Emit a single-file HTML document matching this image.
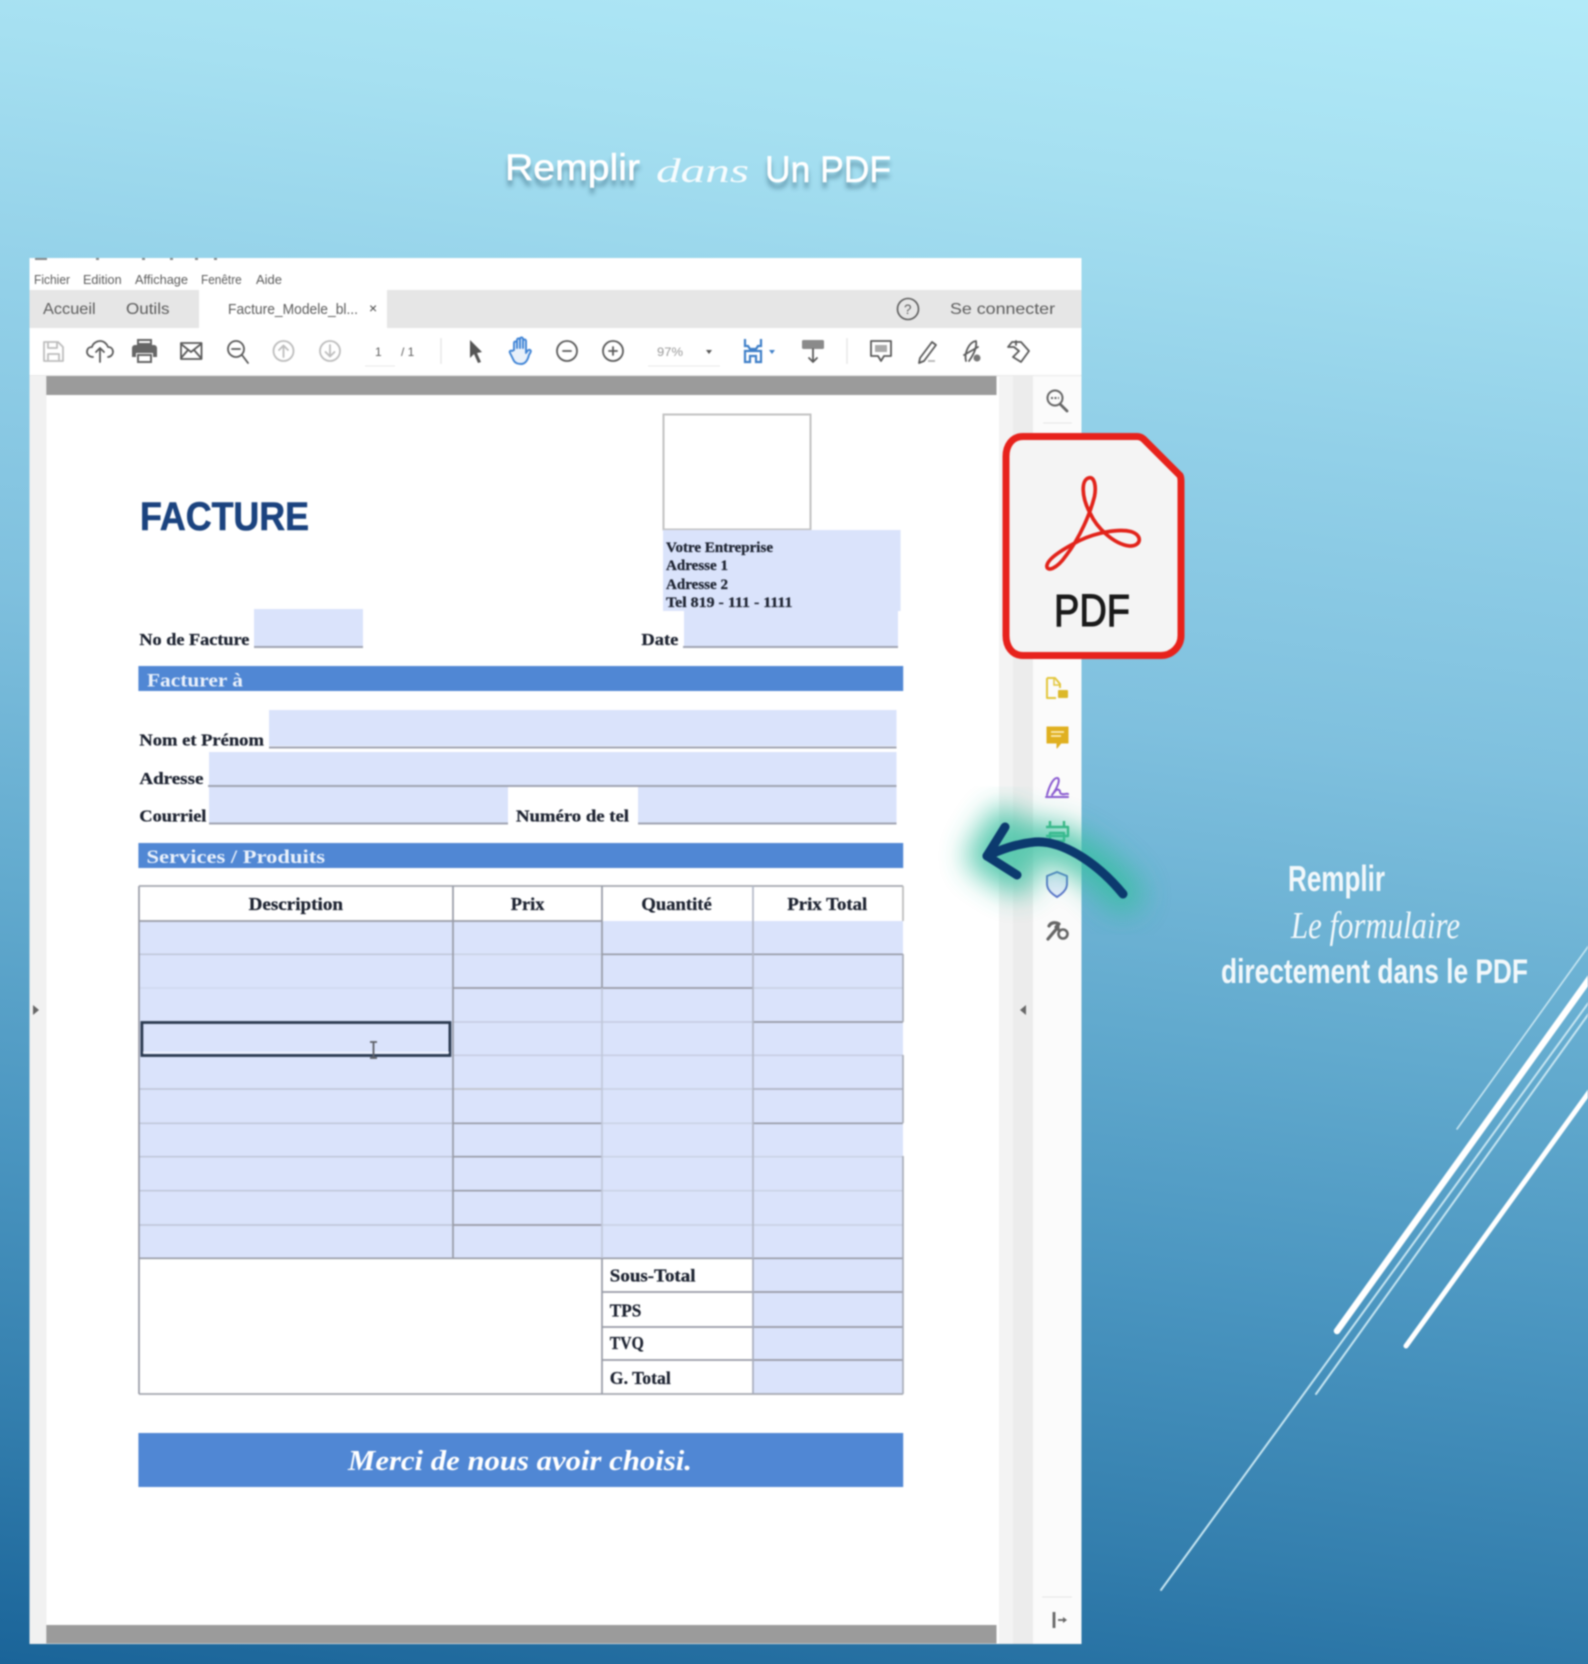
<!DOCTYPE html>
<html lang="fr">
<head>
<meta charset="utf-8">
<title>Remplir dans Un PDF</title>
<style>
html,body{margin:0;padding:0;width:1588px;height:1664px;overflow:hidden}
body{background:linear-gradient(187deg,#b2eaf8 0%,#a6e0f1 12%,#92d0e8 26%,#7fc0de 42%,#62aace 58%,#4a95c0 72%,#347fae 86%,#1a6499 100%)}
svg{position:absolute;left:0;top:0;filter:blur(.7px)}
.s{font-family:"Liberation Serif",serif;font-weight:bold;fill:#1c2230;stroke:#1c2230;stroke-width:.25}
.u{font-family:"Liberation Sans",sans-serif;fill:#5c5c5c}
.g{fill:none;stroke:#5a5a5a;stroke-width:1.8;stroke-linecap:round;stroke-linejoin:round}
.f{fill:none;stroke:#bdbdbd;stroke-width:1.8;stroke-linecap:round;stroke-linejoin:round}
</style>
</head>
<body>
<svg width="1588" height="1664" viewBox="0 0 1588 1664" xmlns="http://www.w3.org/2000/svg">
<defs>
<filter id="shadow" x="-20%" y="-50%" width="140%" height="220%"><feGaussianBlur stdDeviation="2.5"/></filter>
<filter id="glow" x="-40%" y="-60%" width="180%" height="220%"><feGaussianBlur stdDeviation="14"/></filter>
</defs>

<!-- decorative lines -->
<g stroke-linecap="round">
<line x1="1337" y1="1331" x2="1600" y2="964" stroke="#fff" stroke-width="6.500"/>
<line x1="1406" y1="1346" x2="1600" y2="1077" stroke="#fff" stroke-width="5"/>
<line x1="1161" y1="1590" x2="1600" y2="987" stroke="#c7e6f2" stroke-width="2"/>
<line x1="1316" y1="1394" x2="1600" y2="998" stroke="#c7e6f2" stroke-width="2"/>
<line x1="1457" y1="1129" x2="1600" y2="930" stroke="#c7e6f2" stroke-width="1.600"/>
</g>

<!-- title -->
<g font-family="'Liberation Sans',sans-serif" filter="url(#shadow)" fill="#33637a" opacity=".65" font-size="37">
<text x="505" y="186" textLength="135" lengthAdjust="spacingAndGlyphs">Remplir</text>
<text x="765" y="188" textLength="126" lengthAdjust="spacingAndGlyphs">Un PDF</text>
</g>
<g fill="#fff">
<text x="505" y="180" font-family="'Liberation Sans',sans-serif" font-size="37" stroke="#fff" stroke-width=".5" textLength="135" lengthAdjust="spacingAndGlyphs">Remplir</text>
<text x="656" y="182" font-family="'Liberation Serif',serif" font-style="italic" font-size="34" textLength="93" lengthAdjust="spacingAndGlyphs" opacity=".9">dans</text>
<text x="765" y="182" font-family="'Liberation Sans',sans-serif" font-size="37" stroke="#fff" stroke-width=".5" textLength="126" lengthAdjust="spacingAndGlyphs">Un PDF</text>
</g>

<!-- window -->
<rect x="29.5" y="258" width="1052" height="1386" fill="#fff"/>
<g fill="#888"><rect x="35" y="258" width="12" height="2"/><rect x="96" y="258" width="3" height="2"/><rect x="142" y="258" width="3" height="2"/><rect x="170" y="258" width="3" height="2"/><rect x="195" y="258" width="3" height="2"/><rect x="214" y="258" width="3" height="2"/></g>
<g class="u" font-size="12.5" fill="#6a6a6a">
<text x="34" y="284" textLength="36" lengthAdjust="spacingAndGlyphs">Fichier</text>
<text x="83" y="284" textLength="38.600" lengthAdjust="spacingAndGlyphs">Edition</text>
<text x="135" y="284" textLength="53" lengthAdjust="spacingAndGlyphs">Affichage</text>
<text x="201" y="284" textLength="40.700" lengthAdjust="spacingAndGlyphs">Fenêtre</text>
<text x="256" y="284" textLength="26" lengthAdjust="spacingAndGlyphs">Aide</text>
</g>
<rect x="29.5" y="290" width="1052" height="38" fill="#e6e6e6"/>
<rect x="199" y="290" width="188" height="38" fill="#fff"/>
<g class="u" font-size="16">
<text x="43" y="314" textLength="52.600" lengthAdjust="spacingAndGlyphs">Accueil</text>
<text x="126" y="314" textLength="43.500" lengthAdjust="spacingAndGlyphs">Outils</text>
<text x="228" y="314" font-size="14.500" textLength="130" lengthAdjust="spacingAndGlyphs">Facture_Modele_bl...</text>
<text x="369" y="313" font-size="14" fill="#444">×</text>
<text x="950" y="314" textLength="105" lengthAdjust="spacingAndGlyphs">Se connecter</text>
</g>
<circle cx="908" cy="309" r="10.500" fill="none" stroke="#5a5a5a" stroke-width="1.600"/>
<text x="904" y="314" class="u" font-size="13.500">?</text>

<!-- toolbar -->
<rect x="29.5" y="328" width="1052" height="48" fill="#fff"/>
<rect x="29.5" y="375" width="1052" height="1.500" fill="#e9e9e9"/>
<!-- save -->
<path class="f" d="M44 342h14l5 5v14H44zM48 342v6h9v-6M48 361v-7h11v7"/>
<!-- upload -->
<path class="g" d="M93 357c-4 0-6-3-6-5 0-4 3-5 5-5 1-4 5-6 8-6 4 0 7 3 8 6 3 0 5 2 5 5 0 2-2 5-5 5"/>
<path class="g" d="M100 362v-14M96 352l4-4 4 4"/>
<!-- print -->
<path d="M135 345h19a3 3 0 0 1 3 3v9h-4v-4h-17v4h-4v-9a3 3 0 0 1 3-3z" fill="#666"/>
<path d="M138 340h13v4h-13z" fill="none" stroke="#666" stroke-width="2"/>
<rect x="138" y="355" width="13" height="7" fill="none" stroke="#666" stroke-width="2"/>
<!-- mail -->
<rect x="181" y="343" width="20.500" height="16" class="g"/>
<path class="g" d="M181 344l10 8 10-8M181 358l7-8M201 358l-7-8" stroke-width="1.500"/>
<!-- search -->
<circle cx="236" cy="349" r="8" class="g"/>
<path class="g" d="M242 355l6 8M232 349h8" stroke-width="2.200"/>
<!-- page up/down -->
<circle cx="283.500" cy="351" r="10" class="f"/><path class="f" d="M283.500 357v-11M279 350l4.500-4.500 4.500 4.500"/>
<circle cx="330" cy="351" r="10" class="f"/><path class="f" d="M330 345v11M325.500 352l4.500 4.500 4.500-4.500"/>
<g class="u" font-size="12" fill="#777"><text x="375" y="356">1</text><text x="401" y="356">/ 1</text></g>
<line x1="365" y1="366" x2="395" y2="366" stroke="#e8e8e8"/>
<line x1="441" y1="338" x2="441" y2="364" stroke="#e8e8e8" stroke-width="1.500"/>
<!-- cursor -->
<path d="M470 340l12 12-5 1 4 9-3 1-4-9-4 4z" fill="#555"/>
<!-- hand -->
<path d="M514 350v-7c0-2 3-2 3 0v5-8c0-2 3-2 3 0v8-9c0-2 3-2 3 0v9-7c0-2 3-2 3 0v12c1-2 3-4 4-3 2 1 0 3-1 5-1 4-3 9-8 9-5 0-7-2-8-5l-3-6c-1-2 1-3 2-2z" fill="#e8f0fa" stroke="#3f84d6" stroke-width="1.900" stroke-linejoin="round"/>
<!-- zoom out / in -->
<circle cx="567" cy="351" r="10" class="g"/><path class="g" d="M563 351h8" stroke-width="2.400"/>
<circle cx="613" cy="351" r="10" class="g"/><path class="g" d="M609 351h8M613 347v8" stroke-width="2.400"/>
<text x="657" y="356" class="u" font-size="12" style="fill:#999" textLength="26" lengthAdjust="spacingAndGlyphs">97%</text>
<path d="M706 350h6l-3 4z" fill="#555"/>
<line x1="648" y1="366" x2="720" y2="366" stroke="#e8e8e8"/>
<!-- fit -->
<path d="M745 339v7h3l2 3h6l2-3h3v-7M745 362v-11h16v11h-5v-6h-6v6z" fill="none" stroke="#3f7fc8" stroke-width="2.200"/>
<path d="M769 350h6l-3 4z" fill="#3f7fc8"/>
<!-- tool -->
<rect x="802" y="340" width="22" height="9" rx="1.500" fill="#8a8a8a"/>
<path class="g" d="M813 349v13M809 358l4 4 4-4"/>
<line x1="847" y1="338" x2="847" y2="364" stroke="#e8e8e8" stroke-width="1.500"/>
<!-- comment -->
<path class="g" d="M871 341h20v15h-7l-3 5-3-5h-7z"/><rect x="875" y="345" width="12" height="7" fill="#aaa"/>
<!-- pen -->
<path class="g" d="M920 358l12-16 4 3-12 16-5 2z"/><path d="M928 361h7" stroke="#bbb" stroke-width="2"/>
<!-- sign -->
<path class="g" d="M966 361c-2-8 3-19 10-20 1 6-2 13-7 20M964 355l14-8"/><circle cx="977" cy="358" r="3.500" fill="#777"/>
<!-- share -->
<path class="g" d="M1012 342h9l8 9-8 11-8-5 6-6-5-4h-6l4-5zM1016 345v-4"/>

<!-- doc area -->
<rect x="29.5" y="376" width="17" height="1268" fill="#f1f1f1"/>
<rect x="46.300" y="376" width="950.200" height="19" fill="#9b9b9b"/>
<rect x="46.300" y="1625" width="950.200" height="18.500" fill="#9b9b9b"/>
<rect x="999" y="376" width="14" height="1268" fill="#f3f3f3"/>
<rect x="1013" y="376" width="20" height="1268" fill="#ececec"/>
<rect x="1033" y="376" width="48.500" height="1268" fill="#fbfbfb"/>
<path d="M33 1005l6 5-6 5z" fill="#666"/>
<path d="M1026 1005l-6 5 6 5z" fill="#666"/>
<line x1="1043" y1="423" x2="1072" y2="423" stroke="#e6e6e6"/>
<line x1="1042" y1="1597" x2="1072" y2="1597" stroke="#e6e6e6"/>

<!-- logo box & company -->
<rect x="663.500" y="414.500" width="147" height="115" fill="#fff" stroke="#c2c2c2" stroke-width="2"/>
<rect x="663" y="530" width="237.600" height="81" fill="#dae3fb"/>
<g class="s" font-size="14.500">
<text x="666" y="552" textLength="107" lengthAdjust="spacingAndGlyphs">Votre Entreprise</text>
<text x="666" y="570" textLength="62" lengthAdjust="spacingAndGlyphs">Adresse 1</text>
<text x="666" y="589" textLength="62" lengthAdjust="spacingAndGlyphs">Adresse 2</text>
<text x="666" y="607" textLength="126.500" lengthAdjust="spacingAndGlyphs">Tel 819 - 111 - 1111</text>
</g>

<text x="140" y="530" font-family="'Liberation Sans',sans-serif" font-weight="bold" font-size="39.500" fill="#1b437f" stroke="#1b437f" stroke-width=".6" textLength="169" lengthAdjust="spacingAndGlyphs">FACTURE</text>

<!-- fields -->
<g fill="#dae3fb">
<rect x="254" y="609" width="109" height="37"/>
<rect x="684" y="611" width="214" height="35"/>
<rect x="269" y="710" width="627.500" height="36"/>
<rect x="209" y="752" width="687.500" height="33"/>
<rect x="209" y="787" width="299" height="36"/>
<rect x="638" y="787" width="258.500" height="36"/>
</g>
<g fill="#a0a4b2">
<rect x="254" y="646" width="109" height="2"/>
<rect x="683" y="646" width="215" height="2"/>
<rect x="269" y="746.500" width="627.500" height="2"/>
<rect x="208" y="785" width="688.500" height="2"/>
<rect x="209" y="822.500" width="299" height="2"/>
<rect x="638" y="822.500" width="258.500" height="2"/>
</g>
<g class="s" font-size="16.500">
<text x="139.400" y="645" textLength="110" lengthAdjust="spacingAndGlyphs">No de Facture</text>
<text x="641.400" y="645" textLength="37" lengthAdjust="spacingAndGlyphs">Date</text>
<text x="139.400" y="745.700" textLength="124.500" lengthAdjust="spacingAndGlyphs">Nom et Prénom</text>
<text x="139.400" y="784" textLength="64" lengthAdjust="spacingAndGlyphs">Adresse</text>
<text x="139.400" y="821.700" textLength="67" lengthAdjust="spacingAndGlyphs">Courriel</text>
<text x="516" y="821.700" textLength="113" lengthAdjust="spacingAndGlyphs">Numéro de tel</text>
</g>

<!-- section bars -->
<rect x="138.400" y="666" width="764.800" height="25" fill="#5087d4"/>
<rect x="138.400" y="843" width="764.800" height="25" fill="#5087d4"/>
<g font-family="'Liberation Serif',serif" font-weight="bold" font-size="19" fill="#eaf1fb">
<text x="147" y="686.500" textLength="96" lengthAdjust="spacingAndGlyphs">Facturer à</text>
<text x="146.500" y="863" textLength="178.500" lengthAdjust="spacingAndGlyphs">Services / Produits</text>
</g>

<!-- table -->
<rect x="139" y="921" width="764" height="337" fill="#dae3fb"/>
<rect x="753" y="1258" width="150" height="136" fill="#dae3fb"/>
<g stroke-width="1.400">
<g stroke="#bcc3d6">
<line x1="139" y1="954.300" x2="453" y2="954.300"/><line x1="453" y1="954.300" x2="602" y2="954.300" stroke="#c8d0e2"/>
<line x1="139" y1="988" x2="453" y2="988" stroke="#d0d8ee"/>
<line x1="139" y1="1089" x2="453" y2="1089"/><line x1="139" y1="1123.300" x2="453" y2="1123.300"/>
<line x1="139" y1="1156.700" x2="453" y2="1156.700"/><line x1="139" y1="1190.700" x2="453" y2="1190.700"/><line x1="139" y1="1225" x2="453" y2="1225"/>
<line x1="453" y1="1022" x2="903" y2="1022" stroke="#c4cbdf"/><line x1="453" y1="1055.300" x2="903" y2="1055.300" stroke="#c4cbdf"/>
<line x1="602" y1="1089" x2="753" y2="1089" stroke="#c8d0e2"/><line x1="602" y1="1123.300" x2="753" y2="1123.300" stroke="#c8d0e2"/>
<line x1="602" y1="1156.700" x2="903" y2="1156.700" stroke="#c8d0e2"/><line x1="602" y1="1190.700" x2="903" y2="1190.700" stroke="#c8d0e2"/><line x1="602" y1="1225" x2="903" y2="1225" stroke="#c8d0e2"/>
<line x1="753" y1="988" x2="903" y2="988" stroke="#c8d0e2"/>
</g>
<g stroke="#989ba6" stroke-width="1.700">
<line x1="139" y1="921" x2="602" y2="921"/>
<line x1="753" y1="954.300" x2="903" y2="954.300"/><line x1="602" y1="954.300" x2="753" y2="954.300"/>
<line x1="453" y1="988" x2="753" y2="988"/>
<line x1="753" y1="1022" x2="903" y2="1022"/>
<line x1="453" y1="1089" x2="602" y2="1089" stroke="#c0c4cc"/>
<line x1="753" y1="1089" x2="903" y2="1089" stroke="#b0b5c4"/>
<line x1="453" y1="1123.300" x2="602" y2="1123.300"/><line x1="753" y1="1123.300" x2="903" y2="1123.300"/>
<line x1="453" y1="1156.700" x2="602" y2="1156.700"/><line x1="453" y1="1190.700" x2="602" y2="1190.700"/><line x1="453" y1="1225" x2="602" y2="1225"/>
<line x1="139" y1="1258.300" x2="903" y2="1258.300"/>
<line x1="602" y1="1292" x2="903" y2="1292"/><line x1="602" y1="1327" x2="903" y2="1327"/><line x1="602" y1="1360" x2="903" y2="1360"/>
<line x1="139" y1="1394" x2="903" y2="1394" stroke="#a5a8b0"/>
<line x1="139" y1="886" x2="903" y2="886" stroke="#a5a8b0"/>
<line x1="139" y1="886" x2="139" y2="1394"/>
<line x1="903" y1="886" x2="903" y2="921" stroke="#bbb"/>
<line x1="903" y1="954" x2="903" y2="1022" stroke="#a8acb8"/><line x1="903" y1="1055" x2="903" y2="1123" stroke="#a8acb8"/><line x1="903" y1="1156" x2="903" y2="1394" stroke="#a8acb8"/>
<line x1="453" y1="886" x2="453" y2="1258"/>
<line x1="602" y1="886" x2="602" y2="988"/>
<line x1="602" y1="988" x2="602" y2="1258" stroke="#c0c7da"/>
<line x1="602" y1="1258" x2="602" y2="1394"/>
<line x1="753" y1="886" x2="753" y2="1258" stroke="#b4b9c8"/>
<line x1="753" y1="1258" x2="753" y2="1394" stroke="#a8adbc"/>
</g>
</g>
<!-- selected cell -->
<rect x="141.900" y="1022.500" width="308" height="33" fill="none" stroke="#2b3a50" stroke-width="2.800"/>
<line x1="143" y1="1052.500" x2="449" y2="1052.500" stroke="#f2f5fd" stroke-width="1.500"/>
<path d="M370 1042h7M373.500 1042v16M370 1058h7" stroke="#5c5f66" stroke-width="1.800" fill="none"/>

<g class="s" font-size="17.500">
<text x="248.600" y="910" textLength="94.400" lengthAdjust="spacingAndGlyphs">Description</text>
<text x="510.800" y="910" textLength="33.700" lengthAdjust="spacingAndGlyphs">Prix</text>
<text x="641.400" y="910" textLength="70.400" lengthAdjust="spacingAndGlyphs">Quantité</text>
<text x="787.300" y="910" textLength="80" lengthAdjust="spacingAndGlyphs">Prix Total</text>
<text x="609.800" y="1281.700" textLength="85.700" lengthAdjust="spacingAndGlyphs">Sous-Total</text>
<text x="609.800" y="1316.700" textLength="31.600" lengthAdjust="spacingAndGlyphs">TPS</text>
<text x="609.800" y="1349" textLength="34" lengthAdjust="spacingAndGlyphs">TVQ</text>
<text x="609.800" y="1384" textLength="61" lengthAdjust="spacingAndGlyphs">G. Total</text>
</g>

<!-- merci -->
<rect x="138.400" y="1433" width="764.800" height="54" fill="#5087d4"/>
<text x="348" y="1470" font-family="'Liberation Serif',serif" font-weight="bold" font-style="italic" font-size="29" fill="#fff" textLength="344" lengthAdjust="spacingAndGlyphs">Merci de nous avoir choisi.</text>

<!-- sidebar icons -->
<circle cx="1055" cy="398" r="7.500" fill="none" stroke="#666" stroke-width="2"/><path d="M1060 404l7 7" stroke="#666" stroke-width="2.800" stroke-linecap="round"/><path d="M1051 398h8" stroke="#666" stroke-width="2" stroke-dasharray="2 1.500"/>
<path d="M1047 678h8l5 6v4M1047 678v20h9" fill="none" stroke="#e3c63c" stroke-width="2" stroke-linejoin="round"/><path d="M1054 678v7h6" fill="none" stroke="#e3c63c" stroke-width="1.500"/><rect x="1058" y="690" width="10" height="8" rx="1" fill="#dcb82a"/>
<path d="M1047 727h21v16h-7l-4 5v-5h-10z" fill="#e0b020" stroke="#e0b020" stroke-linejoin="round"/><path d="M1051 732h13M1051 736h10" stroke="#fff3c8" stroke-width="1.500"/>
<path d="M1047 795c2-8 6-17 10-17 4 0 1 9-5 17 2-2 4-7 7-5 2 1 0 4 3 4 3 1 4-1 6 0M1046 797h22" fill="none" stroke="#8a5ad0" stroke-width="2" stroke-linecap="round" stroke-linejoin="round"/>
<path d="M1050 821v6h14v-6M1046 827h22v9h-22M1050 833h14v8h-14z" fill="none" stroke="#3eb37a" stroke-width="2.400" stroke-linejoin="round"/>
<path d="M1057 872l10 4v8c0 6-5 10-10 13-5-3-10-7-10-13v-8z" fill="#e4ebfa" stroke="#5a70c8" stroke-width="1.900" stroke-linejoin="round"/>
<path d="M1048 939l10-12M1049 926c2-4 7-4 10-2l-3 3 3 3" fill="none" stroke="#666" stroke-width="3.200" stroke-linecap="round" stroke-linejoin="round"/><circle cx="1063" cy="934" r="4.500" fill="none" stroke="#666" stroke-width="2.600"/>
<path d="M1054 1612v16" stroke="#666" stroke-width="2.800"/><path d="M1058 1620h7" stroke="#666" stroke-width="1.800"/><path d="M1063 1617l4 3-4 3z" fill="#666"/>

<!-- PDF icon -->
<path d="M1023 436.500h114c3 0 5 1 7 3l36 36c1 2 1 4 1 6v154c0 11-9 20-20 20h-138c-11 0-17-9-17-20v-179c0-11 6-20 17-20z" fill="#f4f4f4" stroke="#e7221c" stroke-width="7"/>
<g transform="translate(950 370) scale(.4069 .4082)">
<path d="M342 264C322 268 322 310 345 352C360 385 400 425 440 431C470 433 475 405 445 396C415 388 360 398 318 418C285 435 240 460 238 480C238 495 262 488 285 455C320 410 345 350 355 310C360 285 355 262 342 264Z" fill="none" stroke="#e2231a" stroke-width="9" stroke-linejoin="round"/>
</g>
<text x="1054" y="626" font-family="'Liberation Sans',sans-serif" font-size="45" fill="#1a1a1a" stroke="#1a1a1a" stroke-width="1.100" textLength="76" lengthAdjust="spacingAndGlyphs">PDF</text>

<!-- arrow glow + arrow -->
<g fill="none" stroke-linecap="round" stroke-linejoin="round">
<path d="M1123 894C1095 860 1060 840 1035 842C1015 844 1000 850 987 856M1005 827L987 856L1017 875" stroke="#35bf9f" stroke-width="40" opacity=".8" filter="url(#glow)"/>
<path d="M1123 894C1095 860 1060 840 1035 842C1015 844 1000 850 987 856" stroke="#0c3a6e" stroke-width="9"/>
<path d="M1005 827L987 856L1017 875" stroke="#0c3a6e" stroke-width="9"/>
</g>

<!-- right text -->
<g fill="#f2f8fb" font-family="'Liberation Sans',sans-serif" font-weight="bold">
<text x="1288" y="891" font-size="36" textLength="97" lengthAdjust="spacingAndGlyphs">Remplir</text>
<text x="1221" y="983" font-size="34" textLength="307" lengthAdjust="spacingAndGlyphs">directement dans le PDF</text>
</g>
<text x="1291" y="938" font-family="'Liberation Serif',serif" font-style="italic" font-size="38" fill="#f2f8fb" textLength="169" lengthAdjust="spacingAndGlyphs">Le formulaire</text>
</svg>
</body>
</html>
